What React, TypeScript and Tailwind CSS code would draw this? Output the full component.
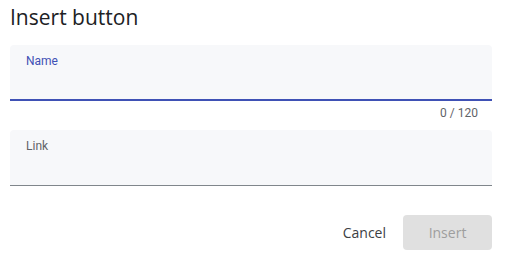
import React from 'react';

export default function App() {
  return (
    <div className="w-[505px] h-[256px] bg-white pl-[10px] pt-[3px]" style={{ fontFamily: 'Roboto, "Liberation Sans", sans-serif' }}>
      <h1 className="text-[21px] leading-[28px] text-[#202124] font-['Open_Sans',sans-serif]">Insert button</h1>

      {/* Name field (focused) */}
      <div className="mt-[14px] w-[482px] h-[56px] bg-[#f7f8fa] rounded-t-[4px] border-b-2 border-[#3f51b5] px-4 pt-[9px]">
        <div className="text-[12px] leading-[14px] text-[#3f51b5]">Name</div>
      </div>
      <div className="w-[482px] pr-[14px] pt-[5px] text-right text-[12px] leading-[14px] text-[#5f6368]">0 / 120</div>

      {/* Link field */}
      <div className="mt-[10px] w-[482px] h-[56px] bg-[#f7f8fa] rounded-t-[4px] border-b border-[#80868b] px-4 pt-[9px]">
        <div className="text-[12px] leading-[14px] text-[#5f6368]">Link</div>
      </div>

      <div className="w-[482px] mt-[29px] flex items-center justify-end font-['Open_Sans',sans-serif]">
        <button className="h-[35px] px-[16px] text-[14px] text-[#3c4043] mr-[1px]">Cancel</button>
        <button className="h-[35px] w-[89px] rounded-[4px] bg-[#e0e0e0] text-[14px] text-[#9e9e9e]" disabled>Insert</button>
      </div>
    </div>
  );
}
